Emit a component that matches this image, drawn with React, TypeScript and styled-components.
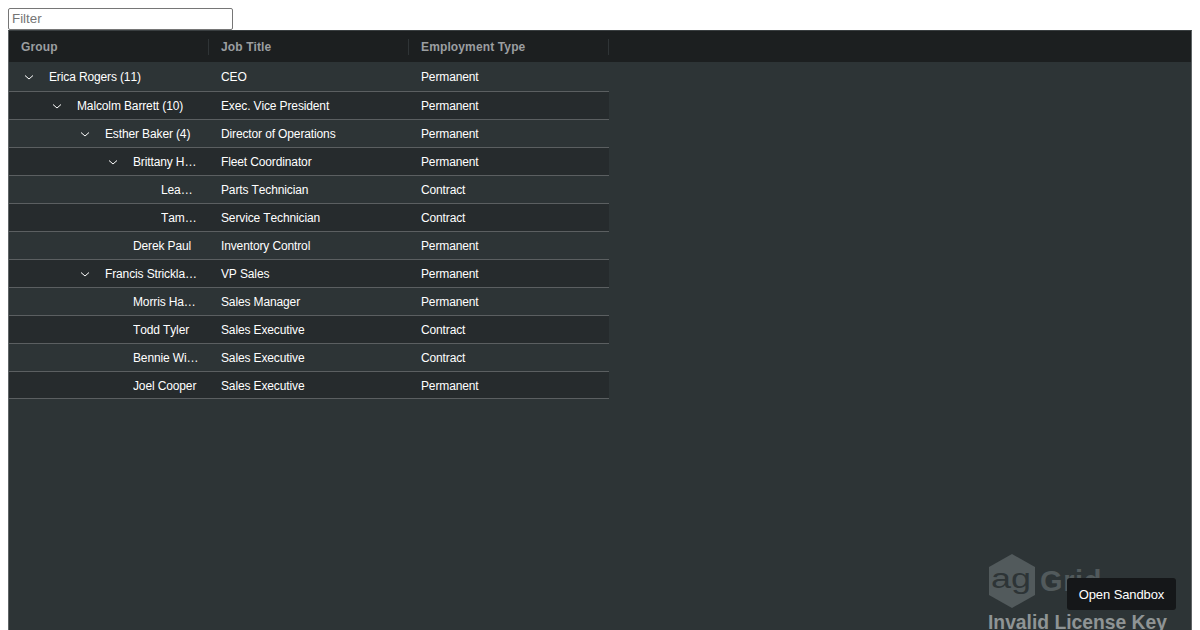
import styled, { createGlobalStyle } from 'styled-components';

const GlobalStyle = createGlobalStyle`
  html, body {
    height: 100%;
    overflow: hidden;
  }
  body {
    margin: 8px;
    background: #fff;
    font-family: "Liberation Sans", Arial, sans-serif;
  }
`;

const FilterInput = styled.input`
  display: block;
  box-sizing: border-box;
  width: 225px;
  height: 22px;
  padding: 0 3px 2px 3px;
  border: 1px solid #767676;
  border-radius: 2px;
  font-family: "Liberation Sans", Arial, sans-serif;
  font-size: 13.33px;
  outline: none;
  &::placeholder {
    color: #757575;
  }
`;

const Grid = styled.div`
  position: relative;
  box-sizing: border-box;
  width: 1184px;
  height: 640px;
  border: 1px solid #5f6466;
  border-top-color: #3a3f41;
  background: #2d3436;
  color: #fff;
  font-size: 12px;
  overflow: hidden;
`;

const HeaderRow = styled.div`
  display: flex;
  height: 31px;
  background: #1c1f20;
  border-bottom: 1px solid #2d3436;
`;

const HeaderCell = styled.div`
  position: relative;
  box-sizing: border-box;
  display: flex;
  align-items: center;
  width: 200px;
  padding: 0 12px;
  font-weight: 700;
  letter-spacing: 0.13px;
  color: #9b9ea0;
  &::after {
    content: '';
    position: absolute;
    right: 0;
    top: 8px;
    height: 16px;
    width: 1px;
    background: #2f3436;
  }
`;

const Row = styled.div<{ $dark: boolean; $first: boolean; $last: boolean }>`
  box-sizing: border-box;
  display: flex;
  align-items: center;
  width: 600px;
  height: ${(p) => (p.$first ? 29 : p.$last ? 27 : 28)}px;
  padding-top: ${(p) => (p.$last ? 1 : 0)}px;
  background: ${(p) => (p.$dark ? '#262b2d' : '#2d3436')};
  border-bottom: 1px solid #5b5f61;
  font-kerning: none;
  letter-spacing: -0.13px;
`;

const GroupCell = styled.div<{ $level: number }>`
  box-sizing: border-box;
  display: flex;
  align-items: center;
  width: 200px;
  padding-left: ${(p) => 12 + p.$level * 28}px;
  padding-right: 10.4px;
`;

const Toggle = styled.span<{ $hidden: boolean }>`
  display: flex;
  flex: none;
  align-items: center;
  justify-content: center;
  width: 16px;
  height: 16px;
  margin-right: 12px;
  visibility: ${(p) => (p.$hidden ? 'hidden' : 'visible')};
`;

const GroupName = styled.span`
  flex: 1;
  min-width: 0;
  overflow: hidden;
  white-space: nowrap;
  text-overflow: ellipsis;
`;

const Cell = styled.div`
  box-sizing: border-box;
  width: 200px;
  padding: 0 12px;
  white-space: nowrap;
`;

const Watermark = styled.div`
  position: absolute;
  left: 979px;
  top: 523px;
`;

const LogoRow = styled.div`
  display: flex;
  align-items: center;
  height: 54px;
`;

const LogoWord = styled.span`
  margin-left: 4px;
  font-size: 29px;
  font-weight: 700;
  letter-spacing: 0.6px;
  color: #525a5c;
`;

const LicenseText = styled.div`
  margin-top: 4px;
  font-size: 19.3px;
  font-weight: 700;
  white-space: nowrap;
  color: #8f9495;
`;

const SandboxButton = styled.div`
  position: absolute;
  left: 1058px;
  top: 547px;
  display: flex;
  align-items: center;
  justify-content: center;
  width: 109px;
  height: 32px;
  border-radius: 3px;
  background: #151719;
  color: #fff;
  font-size: 13px;
  letter-spacing: -0.1px;
`;

const rows = [
  { level: 0, name: 'Erica Rogers (11)', job: 'CEO', type: 'Permanent', open: true },
  { level: 1, name: 'Malcolm Barrett (10)', job: 'Exec. Vice President', type: 'Permanent', open: true },
  { level: 2, name: 'Esther Baker (4)', job: 'Director of Operations', type: 'Permanent', open: true },
  { level: 3, name: 'Brittany Hanson (2)', job: 'Fleet Coordinator', type: 'Permanent', open: true },
  { level: 4, name: 'Leah Flowers', job: 'Parts Technician', type: 'Contract', open: false },
  { level: 4, name: 'Tammy Sutton', job: 'Service Technician', type: 'Contract', open: false },
  { level: 3, name: 'Derek Paul', job: 'Inventory Control', type: 'Permanent', open: false },
  { level: 2, name: 'Francis Strickland (3)', job: 'VP Sales', type: 'Permanent', open: true },
  { level: 3, name: 'Morris Hanson', job: 'Sales Manager', type: 'Permanent', open: false },
  { level: 3, name: 'Todd Tyler', job: 'Sales Executive', type: 'Contract', open: false },
  { level: 3, name: 'Bennie Wise', job: 'Sales Executive', type: 'Contract', open: false },
  { level: 3, name: 'Joel Cooper', job: 'Sales Executive', type: 'Permanent', open: false },
];

function Chevron() {
  return (
    <svg width="16" height="16" viewBox="0 0 16 16" fill="none">
      <path d="M4 6.5 8 10 12 6.5" stroke="#fff" strokeWidth="1" />
    </svg>
  );
}

function App() {
  return (
    <>
      <GlobalStyle />
      <FilterInput placeholder="Filter" />
      <Grid>
        <HeaderRow>
          <HeaderCell>Group</HeaderCell>
          <HeaderCell>Job Title</HeaderCell>
          <HeaderCell>Employment Type</HeaderCell>
        </HeaderRow>
        {rows.map((row, i) => (
          <Row key={row.name} $dark={i % 2 === 1} $first={i === 0} $last={i === rows.length - 1}>
            <GroupCell $level={row.level}>
              <Toggle $hidden={!row.open}>
                <Chevron />
              </Toggle>
              <GroupName>{row.name}</GroupName>
            </GroupCell>
            <Cell>{row.job}</Cell>
            <Cell>{row.type}</Cell>
          </Row>
        ))}
        <Watermark>
          <LogoRow>
            <svg width="48" height="54" viewBox="0 0 48 54">
              <polygon points="24,0 47,13 47,41 24,54 1,41 1,13" fill="#525a5c" />
              <text x="3" y="34" fontSize="27" fontWeight="400" fontFamily="Liberation Sans" fill="#2d3436" textLength="40" lengthAdjust="spacingAndGlyphs">ag</text>
            </svg>
            <LogoWord>Grid</LogoWord>
          </LogoRow>
          <LicenseText>Invalid License Key</LicenseText>
        </Watermark>
        <SandboxButton>Open Sandbox</SandboxButton>
      </Grid>
    </>
  );
}

export default App;
